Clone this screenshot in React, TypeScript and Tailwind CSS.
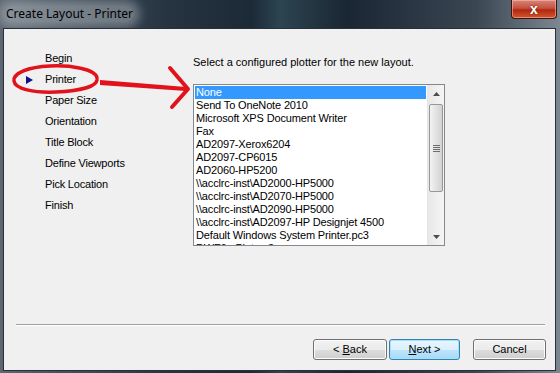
const steps = ["Begin", "Printer", "Paper Size", "Orientation", "Title Block", "Define Viewports", "Pick Location", "Finish"]

const plotters = [
  "None",
  "Send To OneNote 2010",
  "Microsoft XPS Document Writer",
  "Fax",
  "AD2097-Xerox6204",
  "AD2097-CP6015",
  "AD2060-HP5200",
  "\\\\acclrc-inst\\AD2000-HP5000",
  "\\\\acclrc-inst\\AD2070-HP5000",
  "\\\\acclrc-inst\\AD2090-HP5000",
  "\\\\acclrc-inst\\AD2097-HP Designjet 4500",
  "Default Windows System Printer.pc3",
  "DWF6 ePlot.pc3",
]

function ScrollBar() {
  return (
    <div className="flex w-[17px] flex-col border-l border-[#e6e6e6] bg-[linear-gradient(90deg,#e8e8e8,#f5f5f5)]">
      <div className="flex h-[17px] items-center justify-center">
        <svg width="7" height="4" viewBox="0 0 7 4">
          <path d="M0 4 L3.5 0 L7 4 Z" fill="#4d4d4d" />
        </svg>
      </div>
      <div className="mx-[1px] mt-[2px] flex h-[88px] items-center justify-center rounded-[2px] border border-[#979797] bg-[linear-gradient(90deg,#f3f3f3,#e2e2e2_50%,#d3d3d3)]">
        <div className="flex flex-col gap-[1px]">
          <div className="h-[1px] w-[7px] bg-[#6e6e6e]" />
          <div className="h-[1px] w-[7px] bg-[#6e6e6e]" />
          <div className="h-[1px] w-[7px] bg-[#6e6e6e]" />
          <div className="h-[1px] w-[7px] bg-[#6e6e6e]" />
        </div>
      </div>
      <div className="flex-1" />
      <div className="flex h-[17px] items-center justify-center">
        <svg width="7" height="4" viewBox="0 0 7 4">
          <path d="M0 0 L3.5 4 L7 0 Z" fill="#4d4d4d" />
        </svg>
      </div>
    </div>
  )
}

function Button({ children, focused }: { children: React.ReactNode; focused?: boolean }) {
  return (
    <div
      className={
        focused
          ? "flex h-[21px] items-center justify-center rounded-[3px] border border-[#3c7fb1] bg-[linear-gradient(180deg,#eaf6fd_0%,#d9f0fc_50%,#bee6fd_51%,#a7d9f5_100%)] shadow-[inset_0_0_0_1px_#9ce4fc]"
          : "flex h-[21px] items-center justify-center rounded-[3px] border border-[#707070] bg-[linear-gradient(180deg,#f2f2f2_0%,#ebebeb_50%,#dddddd_51%,#cfcfcf_100%)] shadow-[inset_0_0_0_1px_#fcfcfc]"
      }
    >
      {children}
    </div>
  )
}

export default function App() {
  return (
    <div className="relative flex h-[373px] w-[560px] flex-col overflow-hidden bg-[linear-gradient(90deg,#5d6772_0%,#46525e_10%,#263442_30%,#1c2a38_45%,#2c4550_50%,#1a2633_62%,#3a4652_85%,#7c8791_100%)] font-['Liberation_Sans',Arial,sans-serif] text-[11px] text-black">
      {/* Title bar */}
      <div className="flex h-[28px] items-start justify-between">
        <div className="ml-[5px] mt-[6px] rounded-full bg-[rgba(220,225,230,0.35)] px-[1px] font-['Noto_Sans',sans-serif] text-[12px] leading-[16px] text-black shadow-[0_0_10px_6px_rgba(220,225,230,0.35)]">
          Create Layout - Printer
        </div>
        <div className="mr-[3px] flex h-[19px] w-[46px] items-center justify-center rounded-b-[4px] border border-t-0 border-[#3b1510] bg-[linear-gradient(180deg,#d9857a_0%,#c4523f_45%,#b3280f_55%,#d2562f_100%)] shadow-[inset_0_0_0_1px_rgba(255,200,190,0.5)]">
          <span className="text-[14px] font-bold leading-none text-white [text-shadow:0_0_2px_#5a1508]">x</span>
        </div>
      </div>

      {/* Client area */}
      <div className="mb-[2px] ml-[3px] mr-[4px] flex flex-1 flex-col border border-[#26313d] bg-[#f0f0f0]">
        <div className="flex pt-[19px]">
          {/* Steps */}
          <div className="flex w-[189px] flex-col pl-[22px]">
            {steps.map((s) => (
              <div key={s} className="flex h-[21px] items-center">
                <div className="w-[19px]">
                  {s === "Printer" && (
                    <svg width="7" height="8" viewBox="0 0 7 8">
                      <path d="M0 0 L7 4 L0 8 Z" fill="#10108a" />
                    </svg>
                  )}
                </div>
                <span className="tracking-[-0.2px]">{s}</span>
              </div>
            ))}
          </div>

          {/* Plotter list */}
          <div className="flex flex-col">
            <div className="mt-[7px] leading-[14px]">Select a configured plotter for the new layout.</div>
            <div className="mt-[15px] flex h-[162px] w-[252px] border border-[#828790] bg-white">
              <div className="flex-1 overflow-hidden p-[1px]">
                {plotters.map((p, i) => (
                  <div
                    key={p}
                    className={
                      i === 0
                        ? "h-[13px] whitespace-nowrap bg-[#3399ff] pl-[1px] leading-[13px] tracking-[-0.15px] text-white"
                        : "h-[13px] whitespace-nowrap pl-[1px] leading-[13px] tracking-[-0.15px]"
                    }
                  >
                    {p}
                  </div>
                ))}
              </div>
              <ScrollBar />
            </div>
          </div>
        </div>

        {/* Separator + buttons */}
        <div className="mt-auto">
          <div className="ml-[12px] mr-[10px] h-[2px] border-t border-b border-t-[#a0a0a0] border-b-white" />
          <div className="flex justify-end pb-[10px] pr-[9px] pt-[13px]">
            <div className="w-[74px]">
              <Button>
                &lt; <span className="ml-[3px] underline">B</span>ack
              </Button>
            </div>
            <div className="ml-[2px] w-[71px]">
              <Button focused>
                <span className="underline">N</span>ext &gt;
              </Button>
            </div>
            <div className="ml-[13px] w-[73px]">
              <Button>Cancel</Button>
            </div>
          </div>
        </div>
      </div>

      {/* Red annotation drawn over the dialog */}
      <svg className="pointer-events-none absolute left-0 top-0" width="560" height="373" viewBox="0 0 560 373">
        <path
          d="M97 78 C96 69 70 65 50 66 C28 67 13 73 14 81 C15 89 34 93 56 92 C78 91 96 87 97 80"
          fill="none"
          stroke="#e1121c"
          strokeWidth="3.5"
          strokeLinecap="round"
        />
        <path d="M100 80 L186 87 L186 91 L100 85 Z" fill="#e1121c" />
        <path
          d="M170 68 L188 89 L172 107"
          fill="none"
          stroke="#e1121c"
          strokeWidth="4"
          strokeLinecap="round"
          strokeLinejoin="round"
        />
      </svg>
    </div>
  )
}
